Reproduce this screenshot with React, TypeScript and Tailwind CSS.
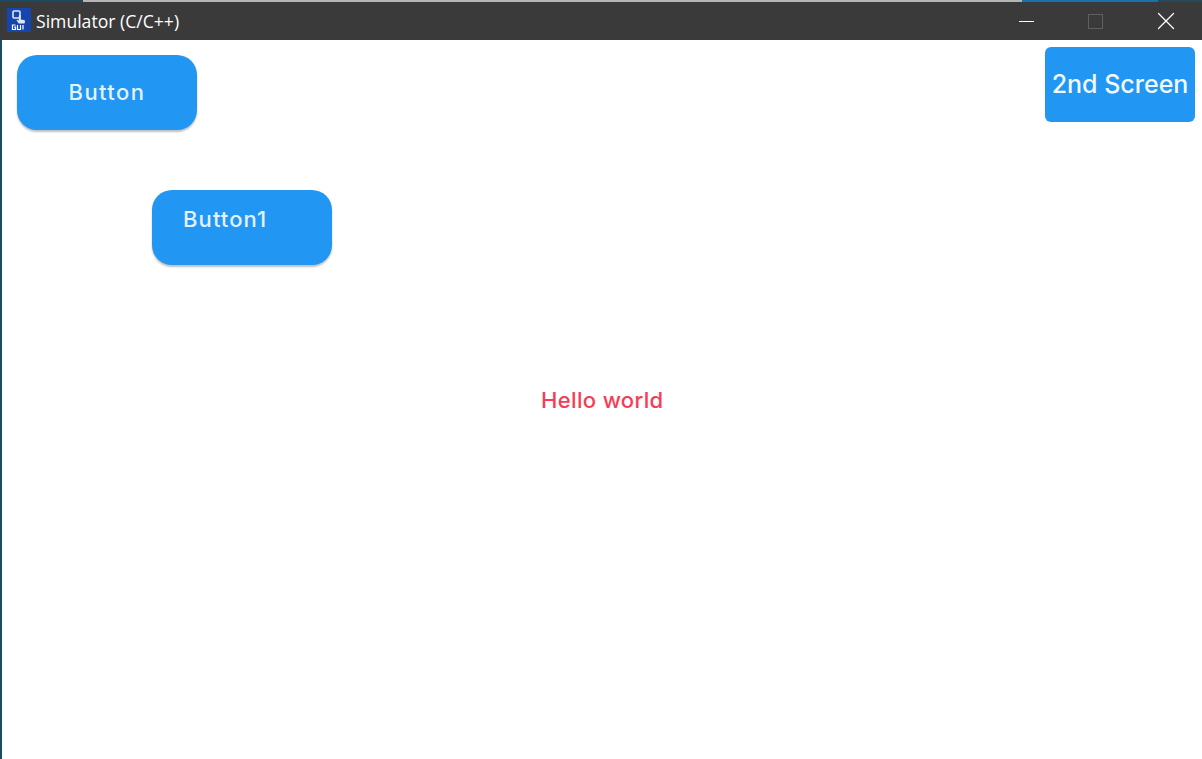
import { X } from "lucide-react";

const blueButton =
  "absolute bg-[#2196f3] font-['Inter','Noto_Sans',sans-serif] font-medium text-[#e3f2fd]";

function AppIcon() {
  return (
    <svg viewBox="0 0 24 24" className="mb-[2px] h-6 w-6 shrink-0">
      <rect width="24" height="24" fill="#1446ad" />
      <rect x="6" y="3" width="7" height="7" rx="1" fill="none" stroke="#dfe6f5" strokeWidth="1.6" />
      <path d="M12.500 7c.9 0 1.300.6 1.300 1.400v3l3 .5c1 .2 1.500 1 1.200 2l-.6 1.600h-5.700l-2.200-3.200 1.300-.5 1 1V8.400c0-.8.4-1.400 1.200-1.400z" fill="#dfe6f5" />
      <path d="M8.500 17h-3v4.500h3v-2.500H7M10.500 17v4.500h3v-4.500M16 17v4.500" fill="none" stroke="#ffffff" strokeWidth="1.200" />
    </svg>
  );
}

function TitleBar() {
  return (
    <div className="flex h-[38px] items-center bg-[#3a3a3a] pl-[7px] text-white">
      <AppIcon />
      <span className="ml-[5px] pt-[2px] font-['Open_Sans',sans-serif] text-[17.6px] leading-none">Simulator (C/C++)</span>
      <div className="ml-auto flex h-full items-center">
        <div className="flex h-full w-[70px] items-center justify-center pl-[3px]">
          <div className="h-px w-[15px] bg-white" />
        </div>
        <div className="flex h-full w-[70px] items-center justify-center">
          <div className="h-[15px] w-[15px] border border-[#5f5f5f]" />
        </div>
        <div className="flex h-full w-[72px] items-center justify-center">
          <X className="h-[30px] w-[30px]" strokeWidth={1} absoluteStrokeWidth />
        </div>
      </div>
    </div>
  );
}

export default function App() {
  return (
    <div className="flex h-[759px] w-[1202px] flex-col overflow-hidden bg-white">
      <div className="flex h-[2px] shrink-0">
        <div className="w-[83px] bg-[#1b4a63]" />
        <div className="w-[939px] bg-[#b5b5b5]" />
        <div className="w-[136px] bg-[#1672a8]" />
        <div className="flex-1 bg-[#27495e]" />
      </div>
      <TitleBar />
      <div className="flex flex-1">
        <div className="w-[2px] bg-[#1b4a63]" />
        <div className="relative flex-1 bg-white">
          <button className={`${blueButton} left-[15px] top-[15px] flex h-[75px] w-[180px] items-center justify-center rounded-[20px] text-[22px] tracking-[1.400px] shadow-[0_2px_2px_rgba(0,0,0,0.25)]`}>
            Button
          </button>
          <button className={`${blueButton} left-[150px] top-[150px] h-[75px] w-[180px] rounded-[20px] pb-[26px] pl-[31px] pt-[8px] text-left text-[22px] leading-[28px] tracking-[1.100px] shadow-[0_2px_2px_rgba(0,0,0,0.25)]`}>
            Button1
          </button>
          <button className={`${blueButton} left-[1043px] top-[7px] flex h-[75px] w-[150px] items-center justify-center rounded-[6px] text-[25px] text-[#f2f9ff]`}>
            2nd Screen
          </button>
          <span className="absolute left-[539px] top-[346px] font-['Inter','Noto_Sans',sans-serif] text-[22px] font-medium leading-[28px] tracking-[0.350px] text-[#f73d55]">
            Hello world
          </span>
        </div>
      </div>
    </div>
  );
}
